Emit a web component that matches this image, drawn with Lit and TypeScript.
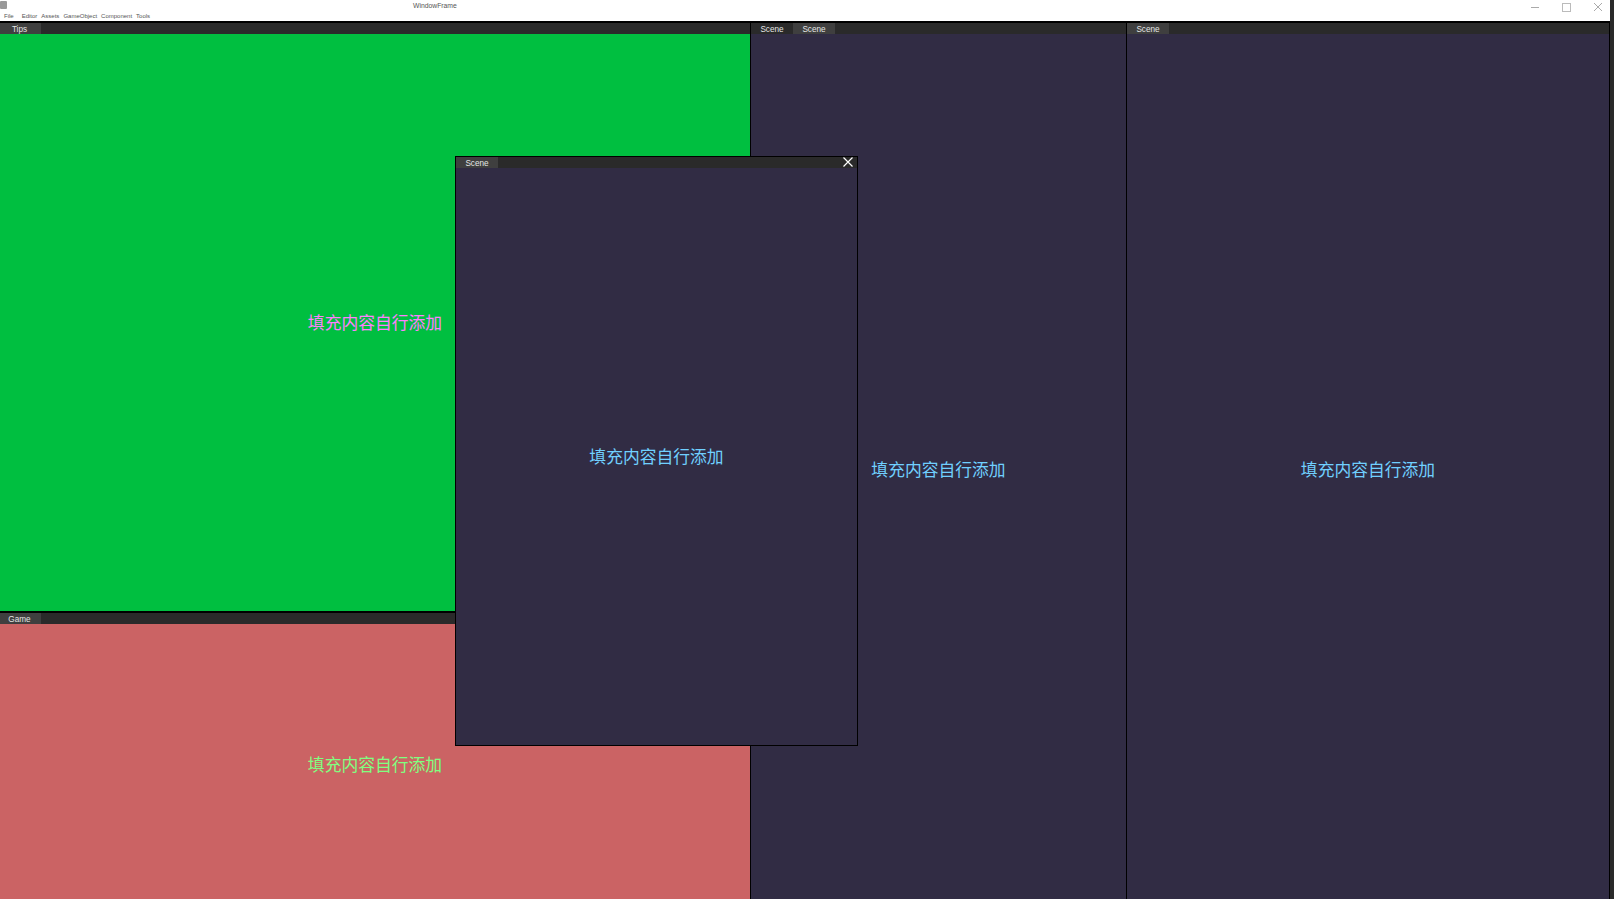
import { LitElement, html, css } from "lit";
import { customElement, property } from "lit/decorators.js";

@customElement("dock-panel")
class DockPanel extends LitElement {
  @property({ type: Array }) tabs: string[] = [];
  @property({ type: Number }) active = 0;
  @property() tone = "dark";
  @property({ type: Boolean }) closable = false;
  @property({ type: Boolean, reflect: true }) edge = false;

  static styles = css`
    :host { display: flex; flex-direction: column; min-width: 0; min-height: 0; }
    .strip { display: flex; flex: none; height: 11px; background: #2a2a2a; position: relative; }
    .tab {
      box-sizing: border-box; width: 42px; height: 11px; padding-top: 2px;
      display: flex; align-items: center; justify-content: center;
      font: 8.2px/9px "Liberation Sans", Arial, sans-serif; color: #e6e6e6;
    }
    :host([edge]) .tab { width: 41px; padding-right: 2px; }
    .tab.on { background: #3f3f3f; }
    .close { position: absolute; right: 3px; top: -1px; width: 12px; height: 12px; display: block; }
    .body {
      flex: 1; display: flex; align-items: center; justify-content: center; min-height: 0;
      padding-bottom: 2px;
      font: 16.8px/24px "Noto Sans CJK SC", "Liberation Sans", sans-serif;
    }
    .dark { background: #312c44; color: #70d0ff; }
    .green { background: #00bf40; color: #ff80ff; }
    .red { background: #cb6364; color: #80ff80; }
  `;

  render() {
    return html`
      <div class="strip">
        ${this.tabs.map((t, i) => html`<div class="tab ${i === this.active ? "on" : ""}">${t}</div>`)}
        ${this.closable
          ? html`<svg class="close" viewBox="0 0 12 12"><path d="M1.5 1.5 10.5 10.5M10.5 1.5 1.5 10.5" stroke="#fff" stroke-width="1.2" fill="none"/></svg>`
          : ""}
      </div>
      <div class="body ${this.tone}">填充内容自行添加</div>
    `;
  }
}

@customElement("app-root")
export class AppRoot extends LitElement {
  static styles = css`
    :host { display: block; width: 1614px; height: 899px; position: relative; overflow: hidden; background: #2a2a2a; }
    .frame { width: 1610px; height: 905px; display: flex; flex-direction: column; background: #000; }
    .title { flex: none; height: 21px; background: #fff; display: flex; position: relative; }
    .left { width: 220px; display: flex; flex-direction: column; }
    .logo { width: 7px; height: 8px; background: #999; margin-top: 1px; border-radius: 1px; }
    .menu {
      display: flex; gap: 4px; padding-left: 4px; margin-top: 3px;
      font: 6px/8px "Liberation Sans", Arial, sans-serif; color: #555;
    }
    .menu .first { margin-right: 4px; }
    .caption {
      position: absolute; left: 413px; top: 1px;
      font: 6.8px/9px "Liberation Sans", Arial, sans-serif; color: #555;
    }
    .winbtns { position: absolute; right: 0; top: 0; height: 14px; display: flex; }
    .winbtns svg { width: 32px; height: 14px; display: block; }
    .dock { flex: 1; min-height: 0; display: flex; gap: 1px; padding-top: 2px; padding-right: 1px; }
    .col1 { width: 750px; display: flex; flex-direction: column; gap: 2px; }
    .col1 .top { height: 588px; }
    .col1 .bot { flex: 1; }
    .col2 { width: 375px; }
    .col3 { flex: 1; }
    .float {
      position: absolute; left: 455px; top: 156px; width: 401px; height: 588px;
      border: 1px solid #000; display: flex; flex-direction: column;
    }
    .float dock-panel { flex: 1; }
  `;

  render() {
    return html`
      <div class="frame">
        <div class="title">
          <div class="left">
            <div class="logo"></div>
            <div class="menu">
              <span class="first">File</span><span>Editor</span><span>Assets</span><span>GameObject</span><span>Component</span><span>Tools</span>
            </div>
          </div>
          <div class="caption">WindowFrame</div>
          <div class="winbtns">
            <svg viewBox="0 0 32 14"><path d="M17 7.5H25" stroke="#aaa" fill="none"/></svg>
            <svg viewBox="0 0 32 14"><rect x="16.5" y="3.5" width="8" height="8" stroke="#bbb" fill="none"/></svg>
            <svg viewBox="0 0 32 14"><path d="M16 3 24 11M24 3 16 11" stroke="#aaa" fill="none"/></svg>
          </div>
        </div>
        <div class="dock">
          <div class="col1">
            <dock-panel class="top" edge tone="green" .tabs=${["Tips"]}></dock-panel>
            <dock-panel class="bot" edge tone="red" .tabs=${["Game"]}></dock-panel>
          </div>
          <dock-panel class="col2" .tabs=${["Scene", "Scene"]} .active=${1}></dock-panel>
          <dock-panel class="col3" .tabs=${["Scene"]}></dock-panel>
        </div>
      </div>
      <div class="float">
        <dock-panel closable .tabs=${["Scene"]}></dock-panel>
      </div>
    `;
  }
}
